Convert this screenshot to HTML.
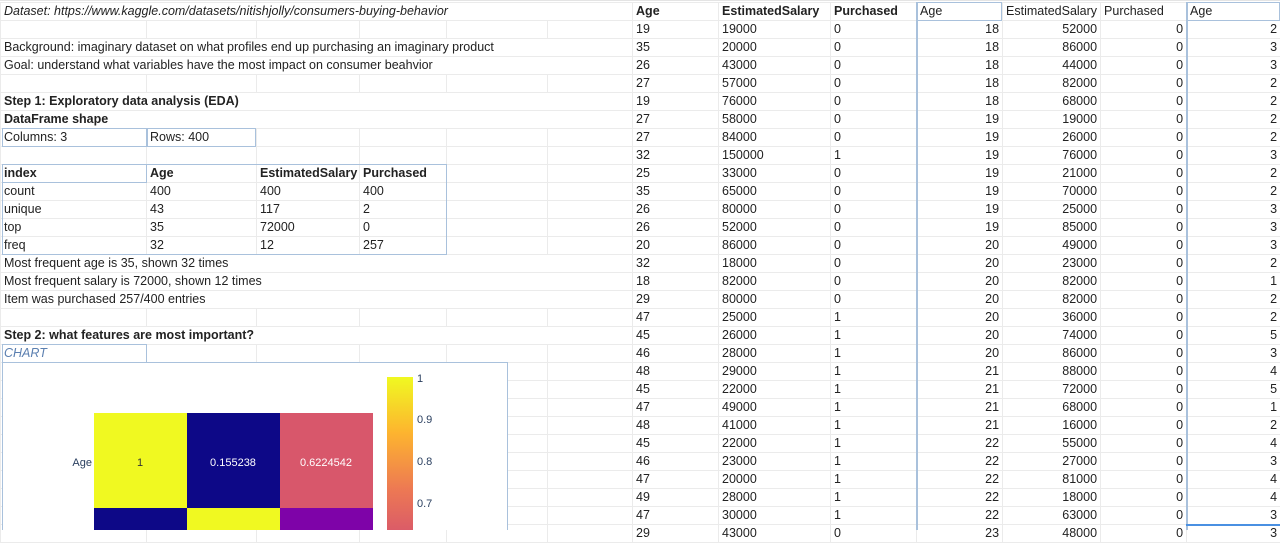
<!DOCTYPE html>
<html><head><meta charset="utf-8"><style>
body{margin:0;width:1280px;height:530px;overflow:hidden;background:#fff;font-family:"Liberation Sans",sans-serif;font-size:12.5px;color:#222;position:relative}
table{position:absolute;left:0;top:2px;border-collapse:collapse;table-layout:fixed;width:1280px}
td{height:17px;border:1px solid #ebebeb;padding:0 0 0 3px;white-space:nowrap;overflow:visible;line-height:17px}
td.r{text-align:right;padding:0 3px 0 0}
b{font-weight:bold}
.box{position:absolute;border:1px solid #a9c1dc;box-sizing:border-box}
</style></head><body>
<div style="position:absolute;left:0;top:0;width:1280px;height:1px;background:#e4e4e4"></div>
<table>
<colgroup><col style="width:146px"><col style="width:110px"><col style="width:103px"><col style="width:87px"><col style="width:101px"><col style="width:85px"><col style="width:86px"><col style="width:112px"><col style="width:86px"><col style="width:86px"><col style="width:98px"><col style="width:86px"><col style="width:94px"></colgroup>
<tr><td colspan="6" style="font-style:italic">Dataset: https://www.kaggle.com/datasets/nitishjolly/consumers-buying-behavior</td><td><b>Age</b></td><td><b>EstimatedSalary</b></td><td><b>Purchased</b></td><td>Age</td><td>EstimatedSalary</td><td>Purchased</td><td>Age</td></tr>
<tr><td></td><td></td><td></td><td></td><td></td><td></td><td>19</td><td>19000</td><td>0</td><td class="r">18</td><td class="r">52000</td><td class="r">0</td><td class="r">2</td></tr>
<tr><td colspan="6">Background: imaginary dataset on what profiles end up purchasing an imaginary product</td><td>35</td><td>20000</td><td>0</td><td class="r">18</td><td class="r">86000</td><td class="r">0</td><td class="r">3</td></tr>
<tr><td colspan="6">Goal: understand what variables have the most impact on consumer beahvior</td><td>26</td><td>43000</td><td>0</td><td class="r">18</td><td class="r">44000</td><td class="r">0</td><td class="r">3</td></tr>
<tr><td></td><td></td><td></td><td></td><td></td><td></td><td>27</td><td>57000</td><td>0</td><td class="r">18</td><td class="r">82000</td><td class="r">0</td><td class="r">2</td></tr>
<tr><td colspan="6"><b>Step 1: Exploratory data analysis (EDA)</b></td><td>19</td><td>76000</td><td>0</td><td class="r">18</td><td class="r">68000</td><td class="r">0</td><td class="r">2</td></tr>
<tr><td colspan="6"><b>DataFrame shape</b></td><td>27</td><td>58000</td><td>0</td><td class="r">19</td><td class="r">19000</td><td class="r">0</td><td class="r">2</td></tr>
<tr><td>Columns: 3</td><td>Rows: 400</td><td></td><td></td><td></td><td></td><td>27</td><td>84000</td><td>0</td><td class="r">19</td><td class="r">26000</td><td class="r">0</td><td class="r">2</td></tr>
<tr><td></td><td></td><td></td><td></td><td></td><td></td><td>32</td><td>150000</td><td>1</td><td class="r">19</td><td class="r">76000</td><td class="r">0</td><td class="r">3</td></tr>
<tr><td><b>index</b></td><td><b>Age</b></td><td><b>EstimatedSalary</b></td><td><b>Purchased</b></td><td></td><td></td><td>25</td><td>33000</td><td>0</td><td class="r">19</td><td class="r">21000</td><td class="r">0</td><td class="r">2</td></tr>
<tr><td>count</td><td>400</td><td>400</td><td>400</td><td></td><td></td><td>35</td><td>65000</td><td>0</td><td class="r">19</td><td class="r">70000</td><td class="r">0</td><td class="r">2</td></tr>
<tr><td>unique</td><td>43</td><td>117</td><td>2</td><td></td><td></td><td>26</td><td>80000</td><td>0</td><td class="r">19</td><td class="r">25000</td><td class="r">0</td><td class="r">3</td></tr>
<tr><td>top</td><td>35</td><td>72000</td><td>0</td><td></td><td></td><td>26</td><td>52000</td><td>0</td><td class="r">19</td><td class="r">85000</td><td class="r">0</td><td class="r">3</td></tr>
<tr><td>freq</td><td>32</td><td>12</td><td>257</td><td></td><td></td><td>20</td><td>86000</td><td>0</td><td class="r">20</td><td class="r">49000</td><td class="r">0</td><td class="r">3</td></tr>
<tr><td colspan="6">Most frequent age is 35, shown 32 times</td><td>32</td><td>18000</td><td>0</td><td class="r">20</td><td class="r">23000</td><td class="r">0</td><td class="r">2</td></tr>
<tr><td colspan="6">Most frequent salary is 72000, shown 12 times</td><td>18</td><td>82000</td><td>0</td><td class="r">20</td><td class="r">82000</td><td class="r">0</td><td class="r">1</td></tr>
<tr><td colspan="6">Item was purchased 257/400 entries</td><td>29</td><td>80000</td><td>0</td><td class="r">20</td><td class="r">82000</td><td class="r">0</td><td class="r">2</td></tr>
<tr><td></td><td></td><td></td><td></td><td></td><td></td><td>47</td><td>25000</td><td>1</td><td class="r">20</td><td class="r">36000</td><td class="r">0</td><td class="r">2</td></tr>
<tr><td colspan="6"><b>Step 2: what features are most important?</b></td><td>45</td><td>26000</td><td>1</td><td class="r">20</td><td class="r">74000</td><td class="r">0</td><td class="r">5</td></tr>
<tr><td style="font-style:italic;color:#5b7fb0">CHART</td><td></td><td></td><td></td><td></td><td></td><td>46</td><td>28000</td><td>1</td><td class="r">20</td><td class="r">86000</td><td class="r">0</td><td class="r">3</td></tr>
<tr><td></td><td></td><td></td><td></td><td></td><td></td><td>48</td><td>29000</td><td>1</td><td class="r">21</td><td class="r">88000</td><td class="r">0</td><td class="r">4</td></tr>
<tr><td></td><td></td><td></td><td></td><td></td><td></td><td>45</td><td>22000</td><td>1</td><td class="r">21</td><td class="r">72000</td><td class="r">0</td><td class="r">5</td></tr>
<tr><td></td><td></td><td></td><td></td><td></td><td></td><td>47</td><td>49000</td><td>1</td><td class="r">21</td><td class="r">68000</td><td class="r">0</td><td class="r">1</td></tr>
<tr><td></td><td></td><td></td><td></td><td></td><td></td><td>48</td><td>41000</td><td>1</td><td class="r">21</td><td class="r">16000</td><td class="r">0</td><td class="r">2</td></tr>
<tr><td></td><td></td><td></td><td></td><td></td><td></td><td>45</td><td>22000</td><td>1</td><td class="r">22</td><td class="r">55000</td><td class="r">0</td><td class="r">4</td></tr>
<tr><td></td><td></td><td></td><td></td><td></td><td></td><td>46</td><td>23000</td><td>1</td><td class="r">22</td><td class="r">27000</td><td class="r">0</td><td class="r">3</td></tr>
<tr><td></td><td></td><td></td><td></td><td></td><td></td><td>47</td><td>20000</td><td>1</td><td class="r">22</td><td class="r">81000</td><td class="r">0</td><td class="r">4</td></tr>
<tr><td></td><td></td><td></td><td></td><td></td><td></td><td>49</td><td>28000</td><td>1</td><td class="r">22</td><td class="r">18000</td><td class="r">0</td><td class="r">4</td></tr>
<tr><td></td><td></td><td></td><td></td><td></td><td></td><td>47</td><td>30000</td><td>1</td><td class="r">22</td><td class="r">63000</td><td class="r">0</td><td class="r">3</td></tr>
<tr><td></td><td></td><td></td><td></td><td></td><td></td><td>29</td><td>43000</td><td>0</td><td class="r">23</td><td class="r">48000</td><td class="r">0</td><td class="r">3</td></tr>
</table>
<div class="box" style="left:2px;top:128px;width:254px;height:19px"></div>
<div class="box" style="left:146px;top:128px;width:1px;height:19px"></div>
<div class="box" style="left:2px;top:164px;width:445px;height:91px"></div>
<div class="box" style="left:2px;top:164px;width:145px;height:19px"></div>
<div class="box" style="left:2px;top:344px;width:145px;height:19px"></div>
<div class="box" style="left:916px;top:2px;width:86px;height:19px"></div>
<div class="box" style="left:916px;top:2px;width:1px;height:528px"></div>
<div class="box" style="left:1186px;top:2px;width:1px;height:528px"></div>
<div class="box" style="left:1186px;top:2px;width:94px;height:19px"></div>
<div style="position:absolute;left:1186px;top:524px;width:94px;height:2px;background:#4a90e2"></div>
<div style="position:absolute;left:2px;top:362px;width:506px;height:168px;background:#fff;border:1px solid #a9c1dc;border-bottom:none;box-sizing:border-box">
<svg width="506" height="168" style="position:absolute;left:-1px;top:-1px" font-family="Liberation Sans,sans-serif" font-size="11">
<defs><linearGradient id="g" x1="0" y1="0" x2="0" y2="1"><stop offset="0" stop-color="#f0f921"/><stop offset="0.35" stop-color="#fdb42f"/><stop offset="0.7" stop-color="#ed7953"/><stop offset="1" stop-color="#d8576b"/></linearGradient></defs>
<rect x="92" y="51" width="93" height="95" fill="#f0f921"/>
<rect x="185" y="51" width="93" height="95" fill="#0d0887"/>
<rect x="278" y="51" width="93" height="95" fill="#d8576b"/>
<rect x="92" y="146" width="93" height="30" fill="#0d0887"/>
<rect x="185" y="146" width="93" height="30" fill="#f0f921"/>
<rect x="278" y="146" width="93" height="30" fill="#7e03a8"/>
<text x="138" y="104" text-anchor="middle" fill="#333">1</text>
<text x="231" y="104" text-anchor="middle" fill="#fff">0.155238</text>
<text x="324" y="104" text-anchor="middle" fill="#fff">0.6224542</text>
<text x="90" y="104" text-anchor="end" fill="#2a3f5f">Age</text>
<rect x="385" y="15" width="26" height="160" fill="url(#g)"/>
<g fill="#2a3f5f"><text x="415" y="20">1</text><text x="415" y="61">0.9</text><text x="415" y="103">0.8</text><text x="415" y="145">0.7</text></g>
</svg></div>
</body></html>
